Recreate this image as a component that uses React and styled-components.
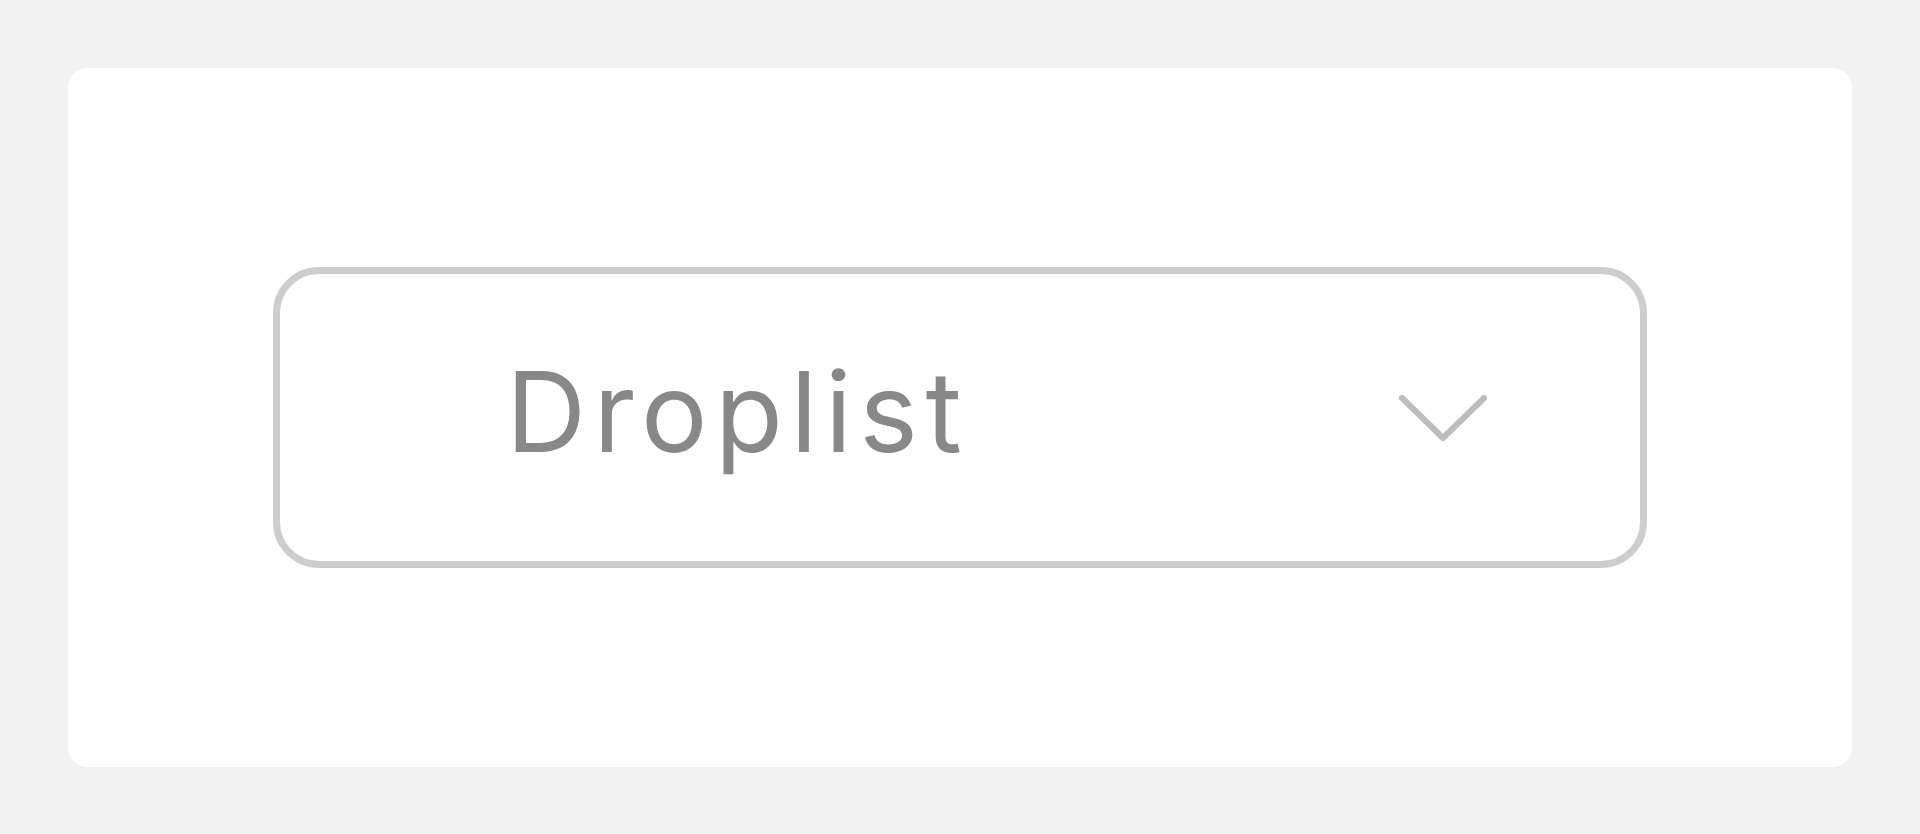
import React from "react";
import styled, { createGlobalStyle } from "styled-components";

const GlobalStyle = createGlobalStyle`
  *, *::before, *::after {
    box-sizing: border-box;
    margin: 0px;
    padding: 0px;
  }

  html, body {
    width: 100%;
    height: 100%;
    background-color: #F2F2F2;
  }

  #root {
    height: 100%;
  }
`;

const Page = styled.div`
  width: 100%;
  height: 100%;
  padding: 68px 68px 67px 68px;

  display: flex;
`;

const Card = styled.div`
  flex: 1;
  background-color: #FFFFFF;
  border-radius: 20px;

  display: flex;
  justify-content: center;
  align-items: center;
`;

const Select = styled.div`
  width: 1374px;
  height: 301px;
  padding: 0px 153px 0px 226px;

  border: 7px solid #CDCDCD;
  border-radius: 46px;

  display: flex;
  justify-content: space-between;
  align-items: center;
  cursor: pointer;
`;

const Label = styled.span`
  font-family: Inter, "Liberation Sans", sans-serif;
  font-size: 111px;
  font-weight: 400;
  letter-spacing: 7.5px;
  line-height: 1;
  color: #888888;
  padding-bottom: 12px;
`;

const Chevron = styled.svg`
  width: 88px;
  height: 46px;
  flex-shrink: 0;
`;

function Droplist({ label }) {
  return (
    <Select>
      <Label>{label}</Label>
      <Chevron viewBox="0 0 88 46" fill="none">
        <path
          d="M3 3 L44 43 L85 3"
          stroke="#BDBDBD"
          strokeWidth="6"
          strokeLinecap="round"
          strokeLinejoin="round"
        />
      </Chevron>
    </Select>
  );
}

function App() {
  return (
    <Page>
      <GlobalStyle />
      <Card>
        <Droplist label="Droplist" />
      </Card>
    </Page>
  );
}

export default App;
